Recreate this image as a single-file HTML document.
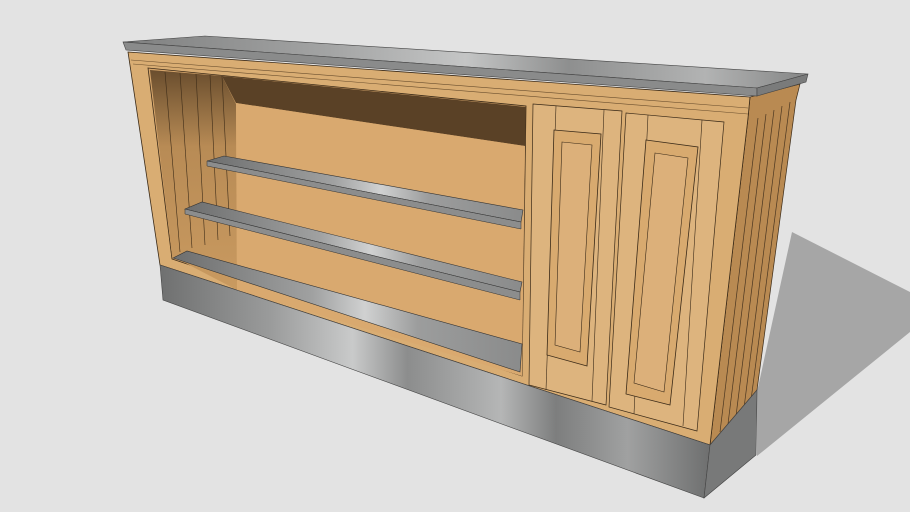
<!DOCTYPE html>
<html><head><style>html,body{margin:0;padding:0;background:#e3e3e3;}svg{display:block}</style></head><body>
<svg width="910" height="512" viewBox="0 0 910 512" xmlns="http://www.w3.org/2000/svg">
<defs>
<linearGradient id="met" x1="0" y1="0" x2="1" y2="0">
<stop offset="0" stop-color="#6f7070"/><stop offset="0.2" stop-color="#9a9b9b"/><stop offset="0.35" stop-color="#c9caca"/><stop offset="0.45" stop-color="#8c8d8d"/><stop offset="0.62" stop-color="#b5b6b6"/><stop offset="0.72" stop-color="#7d7e7e"/><stop offset="0.85" stop-color="#a0a1a1"/><stop offset="1" stop-color="#6e6f6f"/>
</linearGradient>
<linearGradient id="top" x1="0" y1="0" x2="1" y2="0">
<stop offset="0" stop-color="#7f8080"/><stop offset="0.3" stop-color="#a3a4a4"/><stop offset="0.5" stop-color="#c4c5c5"/><stop offset="0.65" stop-color="#8e8f8f"/><stop offset="0.85" stop-color="#b2b3b3"/><stop offset="1" stop-color="#858686"/>
</linearGradient>
<linearGradient id="shelf" x1="0" y1="0" x2="1" y2="0">
<stop offset="0" stop-color="#6d6e6e"/><stop offset="0.4" stop-color="#a0a1a1"/><stop offset="0.55" stop-color="#d0d1d1"/><stop offset="0.7" stop-color="#9c9d9d"/><stop offset="1" stop-color="#8a8b8b"/>
</linearGradient>
<linearGradient id="lw" x1="0" y1="0" x2="0" y2="1">
<stop offset="0" stop-color="#6a4e2e"/><stop offset="0.35" stop-color="#b88b55"/><stop offset="1" stop-color="#c99a60"/>
</linearGradient>
</defs>
<!-- shadow -->
<polygon points="792,232 910,292 910,332 757,456 757,392" fill="#a6a6a6"/>
<!-- side face -->
<polygon points="750,97 800,84 796,100 757,390 710,445 748,118" fill="#b98a52" stroke="#3a2a18" stroke-width="0.7"/>
<g stroke="#4a3620" stroke-width="0.7">
<line x1="758" y1="118" x2="720" y2="432"/><line x1="766" y1="114" x2="728" y2="424"/><line x1="774" y1="110" x2="736" y2="416"/><line x1="782" y1="106" x2="744" y2="408"/><line x1="790" y1="102" x2="751" y2="400"/>
</g>
<!-- front face -->
<polygon points="128,52 750,97 748,118 710,445 160,265" fill="#d9ad73" stroke="#3a2a18" stroke-width="0.8"/>
<line x1="131" y1="60" x2="748" y2="108" stroke="#6b4f2e" stroke-width="0.6"/>
<line x1="133" y1="64" x2="748" y2="114" stroke="#6b4f2e" stroke-width="0.6"/>
<!-- opening -->
<polygon points="148,68 526,106 522,376 172,259" fill="#d5a56b" stroke="#3a2a18" stroke-width="0.8"/>
<!-- left interior wall -->
<polygon points="150,70 222,76 236,104 237,290 172,256" fill="url(#lw)"/>
<g stroke="#3e2c18" stroke-width="0.6">
<line x1="165" y1="72" x2="180" y2="252"/><line x1="180" y1="73" x2="192" y2="248"/><line x1="196" y1="74" x2="205" y2="245"/><line x1="210" y1="75" x2="218" y2="240"/><line x1="222" y1="76" x2="230" y2="236"/>
</g>
<!-- dark top band -->
<polygon points="222,76 526,107 525,146 236,103" fill="#5a4126"/>
<!-- back panel -->
<polygon points="236,103 525,146 522,376 237,290" fill="#d9a96f"/>
<!-- shelves -->
<polygon points="207,161 224,156 523,210 521,222" fill="url(#shelf)" stroke="#333" stroke-width="0.6"/>
<polygon points="207,161 521,222 521,229 207,166" fill="#8c8d8d" stroke="#333" stroke-width="0.5"/>
<polygon points="185,209 202,202 522,282 520,292" fill="url(#shelf)" stroke="#333" stroke-width="0.6"/>
<polygon points="185,209 520,292 520,300 185,214" fill="#8c8d8d" stroke="#333" stroke-width="0.5"/>
<polygon points="173,258 187,251 522,344 520,372" fill="url(#shelf)" stroke="#333" stroke-width="0.6"/>
<!-- doors -->
<polygon points="533,104 622,111 606,405 529,385" fill="#ddb47e" stroke="#3a2a18" stroke-width="0.7"/>
<polygon points="626,113 724,122 697,431 609,407" fill="#ddb47e" stroke="#3a2a18" stroke-width="0.7"/>
<g stroke="#3a2a18" stroke-width="0.6" fill="none">
<line x1="556" y1="106" x2="546" y2="390"/><line x1="604" y1="110" x2="592" y2="401"/>
<line x1="648" y1="115" x2="634" y2="414"/><line x1="702" y1="120" x2="683" y2="426"/>
</g>
<polygon points="554,130 601,134 587,366 547,355" fill="#d8aa6f" stroke="#3a2a18" stroke-width="0.8"/>
<polygon points="562,142 592,145 580,352 555,345" fill="#dcb07a" stroke="#3a2a18" stroke-width="0.6"/>
<polygon points="646,140 698,147 670,405 626,394" fill="#d8aa6f" stroke="#3a2a18" stroke-width="0.8"/>
<polygon points="655,153 688,158 664,392 634,383" fill="#dcb07a" stroke="#3a2a18" stroke-width="0.6"/>
<!-- plinth -->
<polygon points="160,265 710,445 704,498 163,300" fill="url(#met)" stroke="#444" stroke-width="0.6"/>
<polygon points="710,445 757,390 756,455 704,498" fill="#787979" stroke="#444" stroke-width="0.6"/>
<!-- counter top -->
<polygon points="123,42 205,36 808,74 757,88" fill="url(#top)" stroke="#444" stroke-width="0.6"/>
<polygon points="123,42 757,88 757,96 126,50" fill="#8a8b8b" stroke="#444" stroke-width="0.6"/>
<polygon points="757,88 808,74 806,82 757,96" fill="#7a7b7b" stroke="#444" stroke-width="0.6"/>
</svg>
</body></html>
